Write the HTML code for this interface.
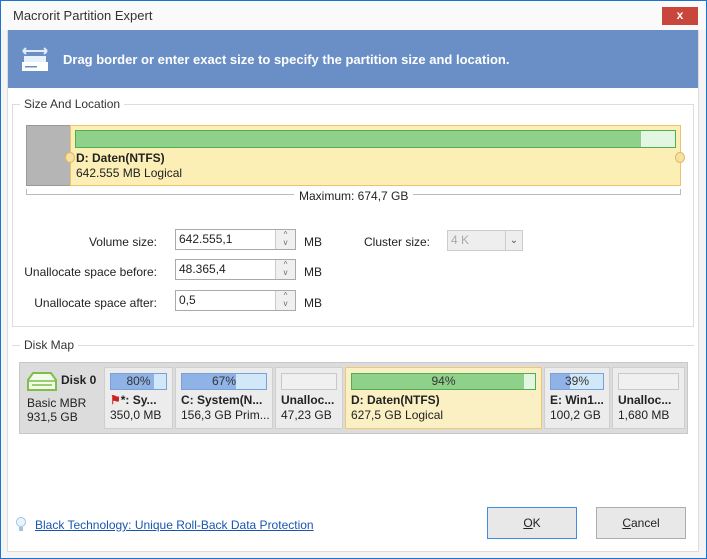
<!DOCTYPE html>
<html><head><meta charset="utf-8"><style>
*{margin:0;padding:0;box-sizing:border-box}
body{width:707px;height:559px;position:relative;background:#fff;font-family:"Liberation Sans",sans-serif;font-size:12px;color:#222;overflow:hidden}
.a{position:absolute}
.win{left:0;top:0;width:707px;height:559px;border:1px solid #1a74d0;background:#f4f4f4}
.inp{background:#fff;border:1px solid #aaa;height:21px;padding:2px 3px;font-size:12px}
.spin{border-left:1px solid #ccc;background:#f0f0f0;width:20px;height:19px;font-size:8px;color:#666;text-align:center;line-height:8px;padding-top:1px}
.lbl{text-align:right;width:150px;font-size:12px}
.cell{background:#ececec;border:1px solid #cfcfcf;top:367px;height:62px}
.bar{position:absolute;left:5px;right:5px;top:5px;height:17px;border:1px solid #7aa0d8;background:#d0e8f8;text-align:center;font-size:12px;line-height:15px;color:#333}
.bar i{position:absolute;left:0;top:0;bottom:0;background:#8fb3e6}
.bar span{position:relative}
.t1{position:absolute;left:5px;top:25px;font-weight:bold;white-space:nowrap;font-size:12px}
.t2{position:absolute;left:5px;top:40px;white-space:nowrap;font-size:12px}
.btn{border:1px solid #adadad;background:#e8e8e8;text-align:center;line-height:30px;font-size:12px}
</style></head><body>
<div class="a win"></div>
<div class="a" style="left:1px;top:1px;width:705px;height:29px;background:#fafafa"></div>
<div class="a" style="left:13px;top:8px;font-size:13px;color:#333">Macrorit Partition Expert</div>
<div class="a" style="left:662px;top:7px;width:36px;height:18px;background:#c9463d;color:#fff;text-align:center;font-weight:bold;line-height:17px;font-size:12px">x</div>
<div class="a" style="left:7px;top:30px;width:692px;height:522px;background:#fff;border:1px solid #ddd"></div>
<div class="a" style="left:8px;top:30px;width:690px;height:58px;background:#6a8fc6"></div>
<svg class="a" style="left:20px;top:46px" width="30" height="26" viewBox="0 0 30 26"><path d="M3 5h24M3 5l3-3M3 5l3 3M27 5l-3-3M27 5l-3 3" stroke="#e0ecf8" stroke-width="2" fill="none"/><rect x="4" y="10" width="22" height="6" fill="#e8f0fa"/><rect x="2" y="16" width="26" height="9" fill="#fff"/><rect x="5" y="20" width="12" height="1.5" fill="#6a8fc6"/></svg>
<div class="a" style="left:63px;top:52px;color:#fff;font-weight:bold;font-size:13px">Drag border or enter exact size to specify the partition size and location.</div>
<div class="a" style="left:12px;top:104px;width:682px;height:223px;border:1px solid #ddd"></div>
<div class="a" style="left:20px;top:97px;background:#fff;padding:0 4px;font-size:12px;color:#333">Size And Location</div>
<div class="a" style="left:26px;top:125px;width:45px;height:61px;background:#b5b5b5;border:1px solid #999"></div>
<div class="a" style="left:70px;top:125px;width:611px;height:61px;background:#fbefb6;border:1px solid #f0c36a"></div>
<div class="a" style="left:75px;top:130px;width:601px;height:18px;background:#e2f6e2;border:1px solid #4fb04f"></div>
<div class="a" style="left:76px;top:131px;width:565px;height:16px;background:#8fd08a"></div>
<div class="a" style="left:65px;top:152px;width:10px;height:11px;border-radius:50%;background:#f8e0a0;border:1px solid #e0b860"></div>
<div class="a" style="left:675px;top:152px;width:10px;height:11px;border-radius:50%;background:#f8e0a0;border:1px solid #e0b860"></div>
<div class="a" style="left:76px;top:151px;font-weight:bold;font-size:12px">D: Daten(NTFS)</div>
<div class="a" style="left:76px;top:166px;font-size:12px">642.555 MB Logical</div>
<div class="a" style="left:26px;top:189px;width:655px;height:6px;border:1px solid #bbb;border-top:none"></div>
<div class="a" style="left:294px;top:189px;background:#fff;padding:0 5px;font-size:12px">Maximum: 674,7 GB</div>
<div class="a lbl" style="left:7px;top:235px">Volume size:</div>
<div class="a lbl" style="left:7px;top:265px">Unallocate space before:</div>
<div class="a lbl" style="left:7px;top:296px">Unallocate space after:</div>
<div class="a inp" style="left:175px;top:229px;width:121px">642.555,1</div>
<div class="a inp" style="left:175px;top:259px;width:121px">48.365,4</div>
<div class="a inp" style="left:175px;top:290px;width:121px">0,5</div>
<div class="a spin" style="left:275px;top:230px">^<br>v</div>
<div class="a spin" style="left:275px;top:260px">^<br>v</div>
<div class="a spin" style="left:275px;top:291px">^<br>v</div>
<div class="a" style="left:304px;top:235px">MB</div>
<div class="a" style="left:304px;top:265px">MB</div>
<div class="a" style="left:304px;top:296px">MB</div>
<div class="a" style="left:364px;top:235px">Cluster size:</div>
<div class="a" style="left:447px;top:230px;width:76px;height:21px;border:1px solid #ccc;background:#eee;color:#aaa;padding:2px 3px">4 K</div>
<div class="a" style="left:505px;top:231px;width:17px;height:19px;border-left:1px solid #ccc;color:#555;font-size:10px;text-align:center;line-height:19px">&#8964;</div>
<div class="a" style="left:12px;top:345px;width:682px;height:1px;background:#ddd"></div>
<div class="a" style="left:20px;top:338px;background:#fff;padding:0 4px;color:#333">Disk Map</div>
<div class="a" style="left:19px;top:362px;width:669px;height:72px;background:#dcdcdc;border:1px solid #c8c8c8"></div>
<svg class="a" style="left:26px;top:371px" width="32" height="22" viewBox="0 0 32 22"><path d="M2 9 L7 2 H25 L30 9 V19 H2 Z" fill="#f4fbea" stroke="#7cc04a" stroke-width="2"/><path d="M2 10h28M6 14h20" stroke="#7cc04a" stroke-width="1.5"/></svg>
<div class="a" style="left:61px;top:373px;font-weight:bold;font-size:12px">Disk 0</div>
<div class="a" style="left:27px;top:396px">Basic MBR</div>
<div class="a" style="left:27px;top:410px">931,5 GB</div>
<div class="a cell" style="left:104px;width:69px"><div class="bar"><i style="width:78%"></i><span>80%</span></div><div class="t1"><span style="color:#c22">&#9873;</span>*: Sy...</div><div class="t2">350,0 MB</div></div>
<div class="a cell" style="left:175px;width:98px"><div class="bar"><i style="width:64%"></i><span>67%</span></div><div class="t1">C: System(N...</div><div class="t2">156,3 GB Prim...</div></div>
<div class="a cell" style="left:275px;width:68px"><div class="bar" style="background:#f0f0f0;border-color:#c8c8c8"></div><div class="t1">Unalloc...</div><div class="t2">47,23 GB</div></div>
<div class="a cell" style="left:345px;width:197px;background:#fbf0c4;border-color:#f0c870"><div class="bar" style="background:#e2f6e2;border-color:#4fb04f"><i style="width:94%;background:#8fd08a"></i><span>94%</span></div><div class="t1">D: Daten(NTFS)</div><div class="t2">627,5 GB Logical</div></div>
<div class="a cell" style="left:544px;width:66px"><div class="bar"><i style="width:37%"></i><span>39%</span></div><div class="t1">E: Win1...</div><div class="t2">100,2 GB</div></div>
<div class="a cell" style="left:612px;width:73px"><div class="bar" style="background:#f0f0f0;border-color:#c8c8c8"></div><div class="t1">Unalloc...</div><div class="t2">1,680 MB</div></div>
<svg class="a" style="left:15px;top:516px" width="12" height="16" viewBox="0 0 12 16"><circle cx="6" cy="6" r="4.5" fill="#eaf4fc" stroke="#9cc4e4"/><rect x="4" y="11" width="4" height="4" fill="#9cc4e4"/></svg>
<div class="a" style="left:35px;top:518px;color:#1a56b0;text-decoration:underline">Black Technology: Unique Roll-Back Data Protection</div>
<div class="a btn" style="left:487px;top:507px;width:90px;height:32px;border-color:#3c8ee6"><u>O</u>K</div>
<div class="a btn" style="left:596px;top:507px;width:90px;height:32px"><u>C</u>ancel</div>
</body></html>
